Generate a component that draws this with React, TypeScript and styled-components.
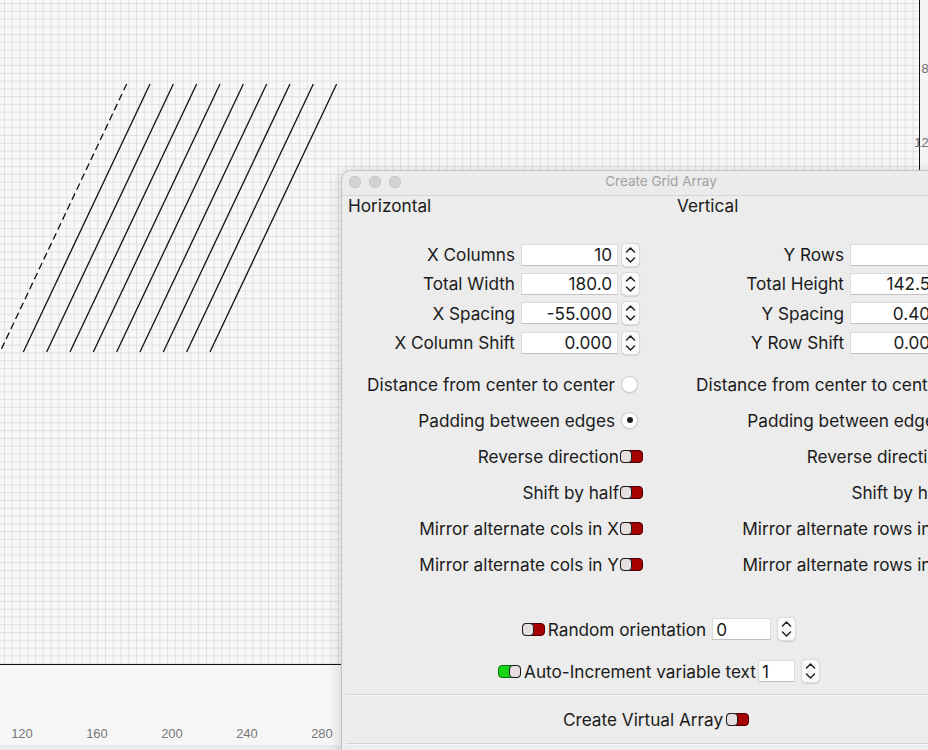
import React from 'react';
import styled, { createGlobalStyle } from 'styled-components';

const UI_FONT = `Inter, "Noto Sans", "Liberation Sans", sans-serif`;

const GlobalStyle = createGlobalStyle`
  html, body {
    margin: 0;
    padding: 0;
    overflow: hidden;
    background: #f4f4f4;
  }
  body {
    font-family: ${UI_FONT};
    color: #1b1b1b;
  }
`;

const CELL = 7.7778;
const LINE_COUNT = 9;
const LINE_STEP = 23.333;

export default function App() {
  return (
    <>
      <GlobalStyle />
      <Screen>
        <Canvas>
          <Drawing width="920" height="665">
            <line
              x1={126.7}
              y1={84}
              x2={0}
              y2={352}
              stroke="#111"
              strokeWidth={1.3}
              strokeDasharray="7 4"
            />
            {Array.from({ length: LINE_COUNT }, (_, i) => (
              <line
                key={i}
                x1={150 + i * LINE_STEP}
                y1={84}
                x2={23.3 + i * LINE_STEP}
                y2={352}
                stroke="#111"
                strokeWidth={1.3}
              />
            ))}
          </Drawing>
        </Canvas>
        <SideRuler>
          <SideTick $top={61}>80</SideTick>
          <SideTick $top={135}>120</SideTick>
        </SideRuler>
        <BottomRuler>
          {['120', '160', '200', '240', '280', '320'].map((n) => (
            <RulerLabel key={n}>{n}</RulerLabel>
          ))}
        </BottomRuler>

        <Dialog>
          <TitleBar>
            <Lights>
              <Light />
              <Light />
              <Light />
            </Lights>
            <Title>Create Grid Array</Title>
            <TitleSpacer />
          </TitleBar>

          <Columns>
            <Column>
              <Heading>Horizontal</Heading>
              <Fields>
                <NumberRow label="X Columns" value="10" />
                <NumberRow label="Total Width" value="180.0" />
                <NumberRow label="X Spacing" value="-55.000" />
                <NumberRow label="X Column Shift" value="0.000" />
              </Fields>
              <Options>
                <RadioRow label="Distance from center to center" />
                <RadioRow label="Padding between edges" checked />
                <ToggleRow label="Reverse direction" />
                <ToggleRow label="Shift by half" />
                <ToggleRow label="Mirror alternate cols in X" />
                <ToggleRow label="Mirror alternate cols in Y" />
              </Options>
            </Column>
            <Column>
              <Heading>Vertical</Heading>
              <Fields>
                <NumberRow label="Y Rows" value="" />
                <NumberRow label="Total Height" value="142.50" />
                <NumberRow label="Y Spacing" value="0.400" />
                <NumberRow label="Y Row Shift" value="0.000" />
              </Fields>
              <Options>
                <RadioRow label="Distance from center to center" />
                <RadioRow label="Padding between edges" checked />
                <ToggleRow label="Reverse direction" />
                <ToggleRow label="Shift by half" />
                <ToggleRow label="Mirror alternate rows in X" />
                <ToggleRow label="Mirror alternate rows in Y" />
              </Options>
            </Column>
          </Columns>

          <Extras>
            <ExtraRow>
              <Toggle />
              <ExtraLabel>Random orientation</ExtraLabel>
              <SmallInput $width={59} defaultValue="0" />
              <Stepper />
            </ExtraRow>
            <ExtraRow $tight>
              <Toggle on />
              <ExtraLabel>Auto-Increment variable text</ExtraLabel>
              <SmallInput $width={37} defaultValue="1" />
              <Stepper />
            </ExtraRow>
          </Extras>
          <Separator />
          <CreateRow>
            <ExtraLabel>Create Virtual Array</ExtraLabel>
            <Toggle />
          </CreateRow>
          <Separator />
        </Dialog>
      </Screen>
    </>
  );
}

function NumberRow({ label, value }: { label: string; value: string }) {
  return (
    <FieldRow>
      <Label>{label}</Label>
      <NumberInput defaultValue={value} />
      <Stepper />
    </FieldRow>
  );
}

function RadioRow({ label, checked }: { label: string; checked?: boolean }) {
  return (
    <OptionRow $inset={39}>
      <Label>{label}</Label>
      <Radio $checked={checked} />
    </OptionRow>
  );
}

function ToggleRow({ label }: { label: string }) {
  return (
    <OptionRow $inset={34} $gap={1}>
      <Label>{label}</Label>
      <Toggle />
    </OptionRow>
  );
}

function Toggle({ on }: { on?: boolean }) {
  return (
    <Track $on={on}>
      <Knob />
    </Track>
  );
}

function Stepper() {
  return (
    <StepBox>
      <svg width="17" height="22" viewBox="0 0 17 22">
        <path d="M4.5 8 L8.5 4 L12.5 8" fill="none" stroke="#222" strokeWidth="1.5" strokeLinecap="round" strokeLinejoin="round" />
        <path d="M4.5 14 L8.5 18 L12.5 14" fill="none" stroke="#222" strokeWidth="1.5" strokeLinecap="round" strokeLinejoin="round" />
      </svg>
    </StepBox>
  );
}

const Screen = styled.div`
  position: relative;
  width: 928px;
  height: 750px;
  overflow: hidden;
  display: grid;
  grid-template-columns: 920px 8px;
  grid-template-rows: 665px 85px;
`;

const Canvas = styled.div`
  position: relative;
  background-color: #f8f8f8;
  background-image: linear-gradient(to right, #e0e0e0 1.3px, transparent 1.3px),
    linear-gradient(to bottom, #e0e0e0 1.3px, transparent 1.3px);
  background-size: ${CELL}px ${CELL}px;
  background-position: 4px 3px;
  border-right: 1.5px solid #111;
  border-bottom: 1.5px solid #111;
`;

const Drawing = styled.svg`
  position: absolute;
  left: 0;
  top: 0;
`;

const SideRuler = styled.div`
  position: relative;
  background: #f4f4f4;
  overflow: visible;
`;

const SideTick = styled.span<{ $top: number }>`
  position: absolute;
  top: ${(p) => p.$top}px;
  right: -8px;
  font-family: 'Liberation Sans', Arial, sans-serif;
  font-size: 13px;
  color: #6f6f6f;
`;

const BottomRuler = styled.div`
  grid-column: 1 / span 2;
  display: flex;
  align-items: flex-end;
  padding-bottom: 9px;
  margin-left: -15.5px;
  background: linear-gradient(to bottom, #f6f6f6 0, #f6f6f6 80px, #ebebeb 80px);
`;

const RulerLabel = styled.span`
  width: 75px;
  flex: none;
  text-align: center;
  font-family: 'Liberation Sans', Arial, sans-serif;
  font-size: 13px;
  color: #777;
`;

const Dialog = styled.div`
  position: absolute;
  left: 341px;
  top: 170px;
  width: 640px;
  height: 620px;
  background: #ececec;
  border: 1px solid #c4c4c4;
  border-radius: 10px 10px 0 0;
  box-shadow: -3px 0 12px rgba(0, 0, 0, 0.12);
  box-sizing: border-box;
`;

const TitleBar = styled.div`
  height: 24px;
  display: grid;
  grid-template-columns: 60px 1fr 60px;
  align-items: center;
  border-bottom: 1px solid #d6d6d6;
  background: #ebebeb;
  border-radius: 10px 10px 0 0;
`;

const Lights = styled.div`
  display: flex;
  gap: 8px;
  padding-left: 7px;
  margin-top: -2px;
`;

const Light = styled.span`
  width: 12px;
  height: 12px;
  border-radius: 50%;
  background: #d2d2d2;
  box-shadow: inset 0 0 0 0.5px #bdbdbd;
`;

const Title = styled.div`
  text-align: center;
  font-size: 13.5px;
  color: #a2a2a2;
  padding-bottom: 4px;
`;

const TitleSpacer = styled.div``;

const Columns = styled.div`
  display: grid;
  grid-template-columns: 329px 329px;
  padding-left: 6px;
`;

const Column = styled.div`
  display: flex;
  flex-direction: column;
`;

const Heading = styled.div`
  height: 20px;
  line-height: 20px;
  font-size: 17.2px;
`;

const Fields = styled.div`
  display: flex;
  flex-direction: column;
  margin-top: 24px;
`;

const FieldRow = styled.div`
  height: 29.3px;
  display: flex;
  align-items: center;
  justify-content: flex-end;
  padding-right: 37px;
`;

const Label = styled.span`
  font-size: 17.2px;
  white-space: nowrap;
  margin-right: 6px;
`;

const NumberInput = styled.input.attrs({ readOnly: true })`
  width: 97px;
  height: 22px;
  box-sizing: border-box;
  border: 1px solid #dadada;
  border-bottom-color: #c2c2c2;
  background: #fff;
  font-family: ${UI_FONT};
  font-size: 17.2px;
  color: #1b1b1b;
  text-align: right;
  padding: 0 5px;
  margin-right: 3px;
  outline: none;
`;

const SmallInput = styled(NumberInput)<{ $width: number }>`
  width: ${(p) => p.$width}px;
  text-align: left;
  padding: 0 3px;
`;

const StepBox = styled.span`
  width: 19px;
  height: 24px;
  box-sizing: border-box;
  display: flex;
  align-items: center;
  justify-content: center;
  background: #fafafa;
  border: 1px solid #dcdcdc;
  border-radius: 5px;
  box-shadow: 0 0.5px 1px rgba(0, 0, 0, 0.12);
`;

const Options = styled.div`
  display: flex;
  flex-direction: column;
  margin-top: 9px;
`;

const OptionRow = styled.div<{ $inset: number; $gap?: number }>`
  height: 36px;
  display: flex;
  align-items: center;
  justify-content: flex-end;
  padding-right: ${(p) => p.$inset}px;

  ${Label} {
    margin-right: ${(p) => p.$gap ?? 6}px;
  }
`;

const Radio = styled.span<{ $checked?: boolean }>`
  position: relative;
  width: 17px;
  height: 17px;
  box-sizing: border-box;
  border-radius: 50%;
  background: #fff;
  border: 1px solid #cdcdcd;
  box-shadow: 0 0.5px 1px rgba(0, 0, 0, 0.15);

  &::after {
    content: '';
    display: ${(p) => (p.$checked ? 'block' : 'none')};
    position: absolute;
    left: 50%;
    top: 50%;
    width: 6px;
    height: 6px;
    margin: -3px 0 0 -3px;
    border-radius: 50%;
    background: #1e1e1e;
  }
`;

const Track = styled.span<{ $on?: boolean }>`
  width: 23px;
  height: 13px;
  box-sizing: border-box;
  display: inline-flex;
  flex-direction: ${(p) => (p.$on ? 'row-reverse' : 'row')};
  flex: none;
  border-radius: 4px;
  background: ${(p) => (p.$on ? '#16d616' : '#a60000')};
  border: 1px solid ${(p) => (p.$on ? '#0b6e0b' : '#4a0000')};
`;

const Knob = styled.span`
  width: 12px;
  height: 13px;
  margin: -1px;
  box-sizing: border-box;
  border-radius: 4px;
  border: 1.5px solid #1a1a1a;
  background: #e6dfdf;
`;

const Extras = styled.div`
  display: flex;
  flex-direction: column;
  align-items: center;
  margin-top: 32px;
  margin-bottom: 8px;
  padding-right: 4px;
`;

const ExtraRow = styled.div<{ $tight?: boolean }>`
  height: 30px;
  display: flex;
  align-items: center;
  gap: 3px;
  margin-bottom: ${(p) => (p.$tight ? 0 : 12)}px;

  ${SmallInput} {
    margin-left: ${(p) => (p.$tight ? -1 : 3)}px;
  }
`;

const ExtraLabel = styled.span`
  font-size: 17.2px;
  white-space: nowrap;
`;

const Separator = styled.div`
  height: 1px;
  margin-left: 4px;
  background: #d3d3d3;
  border-bottom: 1px solid #f7f7f7;
`;

const CreateRow = styled.div`
  height: 47px;
  display: flex;
  align-items: center;
  justify-content: center;
  gap: 3px;
  padding-right: 10px;
`;
